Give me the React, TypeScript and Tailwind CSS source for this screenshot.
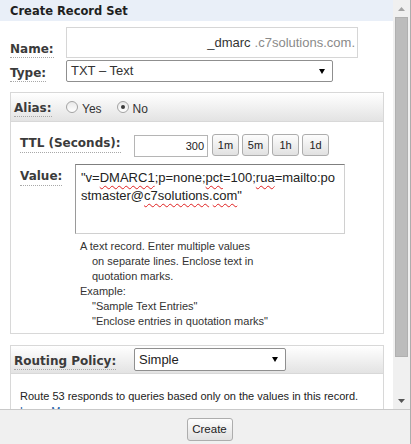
import React from 'react';

const labelCls =
  "block font-['DejaVu_Sans',Verdana,sans-serif] font-bold text-[12px] leading-[14px] text-[#3b3b3b] border-b border-dotted border-[#a8a8a8]";

const btnCls =
  "h-[22px] rounded-[3px] border border-[#adadad] bg-linear-to-b from-[#fdfdfd] to-[#e1e1e1] text-[11px] leading-[20px] text-[#222] flex items-center justify-center";

const squiggle = 'underline decoration-wavy decoration-[#e02020] decoration-1 underline-offset-[3px]';

function Arrow({ color = '#000' }: { color?: string }) {
  return (
    <svg width="6" height="5" viewBox="0 0 6 5" className="block">
      <polygon points="0,0 6,0 3,5" fill={color} />
    </svg>
  );
}

function Radio({ checked }: { checked?: boolean }) {
  return (
    <span className="w-[12px] h-[12px] rounded-full border border-[#a3a3a3] bg-linear-to-b from-[#e9e9e9] to-white flex items-center justify-center">
      {checked && <span className="w-[4px] h-[4px] rounded-full bg-[#3a3a3a]" />}
    </span>
  );
}

export default function App() {
  return (
    <div className="w-[411px] h-[444px] flex flex-col bg-white border-r border-[#adadad] overflow-hidden font-['Liberation_Sans',Arial,sans-serif] text-[#333]">
      <div className="flex h-[409px] min-h-0">
        {/* scrolling content */}
        <div className="w-[393px] overflow-hidden">
          <div className="h-[21px] bg-[#e9eff8] pl-[10px] pt-[2px] font-['DejaVu_Sans',Verdana,sans-serif] font-bold text-[11.5px] leading-[19px] text-[#1f1f1f]">
            Create Record Set
          </div>

          {/* Name */}
          <div className="flex items-end mt-[6px] pl-[10px]">
            <div className="w-[56px] flex">
              <span className={`${labelCls} pb-[1px]`}>Name:</span>
            </div>
            <div className="w-[292px] h-[31px] border border-[#d6d6d6] flex items-center justify-end pr-[2px] text-[13px]">
              <span className="text-[#333]">_dmarc</span>
              <span className="ml-[4px] text-[#8a8a8a]">.c7solutions.com.</span>
            </div>
          </div>

          {/* Type */}
          <div className="flex items-end mt-[2px] pl-[10px]">
            <div className="w-[56px] flex">
              <span className={`${labelCls} pb-[1px]`}>Type:</span>
            </div>
            <div className="w-[267px] h-[22px] border border-[#8f8f8f] rounded-[2px] flex items-center justify-between pl-[4px] pr-[7px] text-[13px] text-[#333]">
              <span>TXT – Text</span>
              <Arrow />
            </div>
          </div>

          {/* Alias panel */}
          <div className="mt-[10px] ml-[10px] w-[374px] border border-[#d8d8d8]">
            <div className="h-[29px] border-b border-[#d8d8d8] bg-linear-to-b from-white to-[#e3e3e3] flex items-end pb-[4px] pl-[3px]">
              <div className="w-[52px] flex">
                <span className={`${labelCls} pb-[1px]`}>Alias:</span>
              </div>
              <div className="flex items-end text-[12px] text-[#333]">
                <span className="mb-[4px]">
                  <Radio />
                </span>
                <span className="ml-[4px] leading-[14px] pb-[1px]">Yes</span>
                <span className="ml-[15px] mb-[4px]">
                  <Radio checked />
                </span>
                <span className="ml-[4px] leading-[14px] pb-[1px]">No</span>
              </div>
            </div>

            <div className="pt-[13px] pl-[9px] pb-[4px]">
              {/* TTL */}
              <div className="flex items-start h-[22px]">
                <div className="w-[114px] flex">
                  <span className={`${labelCls} pt-[1px] pb-[2px]`}>TTL (Seconds):</span>
                </div>
                <div className="w-[74px] h-[22px] border border-[#b5b5b5] flex items-center justify-end pr-[3px] text-[11px] text-[#222]">
                  300
                </div>
                <div className="flex gap-[3px] ml-[4px] -mt-[1px]">
                  <div className={`${btnCls} w-[27px]`}>1m</div>
                  <div className={`${btnCls} w-[27px]`}>5m</div>
                  <div className={`${btnCls} w-[27px]`}>1h</div>
                  <div className={`${btnCls} w-[27px]`}>1d</div>
                </div>
              </div>

              {/* Value */}
              <div className="flex items-start mt-[7px]">
                <div className="w-[55px] flex pt-[5px]">
                  <span className={`${labelCls} pb-[2px]`}>Value:</span>
                </div>
                <div>
                  <div className="w-[270px] h-[70px] border border-[#d0d0d0] border-t-[#7f7f7f] border-l-[#9a9a9a] pl-[5px] pt-[4px] text-[13px] leading-[18px] text-[#222]">
                    <div>
                      "v=<span className={squiggle}>DMARC1</span>;p=none;<span className={squiggle}>pct</span>=100;<span className={squiggle}>rua</span>=mailto:po
                    </div>
                    <div>
                      stmaster@<span className={squiggle}>c7solutions</span>.<span className={squiggle}>com</span>"
                    </div>
                  </div>
                  <div className="ml-[5px] mt-[5px] text-[11px] leading-[15px] text-[#333]">
                    <div>A text record. Enter multiple values</div>
                    <div className="pl-[12px]">on separate lines. Enclose text in</div>
                    <div className="pl-[12px]">quotation marks.</div>
                    <div>Example:</div>
                    <div className="pl-[12px]">"Sample Text Entries"</div>
                    <div className="pl-[12px]">"Enclose entries in quotation marks"</div>
                  </div>
                </div>
              </div>
            </div>
          </div>

          {/* Routing policy panel */}
          <div className="mt-[11px] ml-[10px] w-[374px] border border-[#d8d8d8]">
            <div className="h-[28px] border-b border-[#d8d8d8] bg-linear-to-b from-white to-[#e3e3e3] flex items-start">
              <div className="w-[123px] pl-[3px] pt-[8px] flex">
                <span className={`${labelCls} pb-[1px]`}>Routing Policy:</span>
              </div>
              <div className="mt-[2px] w-[152px] h-[23px] border border-[#8f8f8f] rounded-[2px] bg-white flex items-center justify-between pl-[4px] pr-[7px] text-[13px] text-[#222]">
                <span>Simple</span>
                <Arrow />
              </div>
            </div>
            <div className="pt-[15px] pl-[9px] text-[11px] leading-[15px] text-[#222]">
              <div>Route 53 responds to queries based only on the values in this record.</div>
              <div className="text-[#1a5ea8]">Learn More</div>
            </div>
          </div>
        </div>

        {/* scrollbar */}
        <div className="w-[17px] bg-[#f0f0f0] flex flex-col">
          <div className="h-[17px] flex items-center justify-center">
            <svg width="7" height="4" viewBox="0 0 7 4">
              <polygon points="0,4 7,4 3.5,0" fill="#a3a3a3" />
            </svg>
          </div>
          <div className="mx-[2px] h-[340px] bg-[#bcbcbc] border border-[#b0b0b0]" />
          <div className="flex-1" />
          <div className="h-[17px] flex items-center justify-center">
            <svg width="7" height="4" viewBox="0 0 7 4">
              <polygon points="0,0 7,0 3.5,4" fill="#555" />
            </svg>
          </div>
        </div>
      </div>

      {/* footer */}
      <div className="h-[35px] border-t border-[#c9c9c9] bg-[#f0f0f0] flex justify-center items-start pl-[9px] pt-[8px]">
        <div className="w-[46px] h-[23px] rounded-[3px] border border-[#adadad] bg-linear-to-b from-[#fdfdfd] to-[#e1e1e1] flex items-center justify-center text-[11.5px] text-[#222]">
          Create
        </div>
      </div>
    </div>
  );
}
